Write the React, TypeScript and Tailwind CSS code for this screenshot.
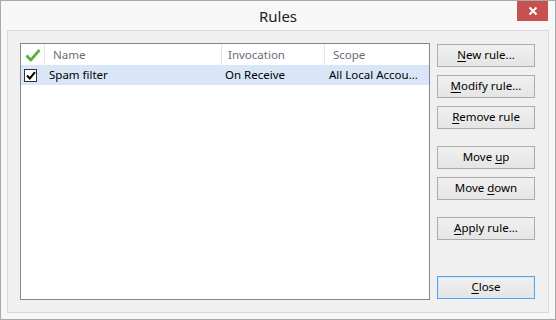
import React from "react";

const font = { fontFamily: '"Segoe UI", "Noto Sans", "Open Sans", sans-serif' };

function Btn({ children, primary }: { children: React.ReactNode; primary?: boolean }) {
  return (
    <div
      className={
        "h-[23px] w-[98px] flex items-center justify-center text-[11.5px] text-black border bg-gradient-to-b from-[#f0f0f0] to-[#e5e5e5] " +
        (primary ? "border-[#5aa2e6] shadow-[inset_0_0_0_1px_#d6e8fa]" : "border-[#acacac]")
      }
    >
      <span className="leading-none pb-[1px]">{children}</span>
    </div>
  );
}

const U = ({ c }: { c: string }) => <span className="underline underline-offset-2">{c}</span>;

export default function App() {
  return (
    <div
      className="w-[556px] h-[320px] border border-[#a9a9a9] bg-[#f7f7f7] flex flex-col overflow-hidden"
      style={font}
    >
      {/* title bar */}
      <div className="relative h-[29px] shrink-0 flex items-center justify-center">
        <span className="text-[15px] text-[#222] pt-[1px]">Rules</span>
        <div className="absolute top-0 right-[7px] w-[31px] h-[20px] bg-[#c75050] flex items-center justify-center">
          <svg width="10" height="10" viewBox="0 0 10 10">
            <path d="M1.5 1.5 L8.5 8.5 M8.5 1.5 L1.5 8.5" stroke="white" strokeWidth="2" />
          </svg>
        </div>
      </div>

      {/* content */}
      <div className="mx-[6px] h-[283px] border border-[#dadada] bg-[#f0f0f0] flex px-[12px] pt-[12px]">
        {/* list */}
        <div className="w-[410px] h-[257px] border border-[#828790] bg-white flex flex-col text-[11.5px]">
          <div className="flex h-[21px] items-center">
            <div className="w-[24px] h-full flex items-center justify-center border-r border-[#e5e5e5]">
              <svg width="16" height="14" viewBox="0 0 16 14">
                <path d="M1.5 7.5 L5.8 12 L14.5 2" stroke="#5cb03c" strokeWidth="2.8" fill="none" strokeLinejoin="round" />
              </svg>
            </div>
            <div className="w-[177px] h-full flex items-center pl-[8px] border-r border-[#e5e5e5] text-[#666d78]">Name</div>
            <div className="w-[103px] h-full flex items-center pl-[6px] border-r border-[#e5e5e5] text-[#666d78]">Invocation</div>
            <div className="flex-1 h-full flex items-center pl-[8px] text-[#666d78]">Scope</div>
          </div>
          <div className="flex h-[20px] items-center bg-[#d9e6f8] text-black">
            <div className="w-[24px] flex items-center pl-[3px]">
              <div className="w-[13px] h-[13px] border border-[#333] bg-white flex items-center justify-center">
                <svg width="10" height="9" viewBox="0 0 10 9">
                  <path d="M1 4.5 L3.8 7.5 L9 1.2" stroke="black" strokeWidth="2" fill="none" />
                </svg>
              </div>
            </div>
            <div className="w-[177px] pl-[4px]">Spam filter</div>
            <div className="w-[103px] pl-[3px]">On Receive</div>
            <div className="flex-1 pl-[4px] whitespace-nowrap overflow-hidden">All Local Accou...</div>
          </div>
        </div>

        {/* buttons */}
        <div className="ml-[7px] h-[257px] flex flex-col py-[1px]">
          <Btn><U c="N" />ew rule...</Btn>
          <div className="h-[8px]" />
          <Btn><U c="M" />odify rule...</Btn>
          <div className="h-[8px]" />
          <Btn><U c="R" />emove rule</Btn>
          <div className="h-[17px]" />
          <Btn>Move <U c="u" />p</Btn>
          <div className="h-[8px]" />
          <Btn>Move <U c="d" />own</Btn>
          <div className="h-[17px]" />
          <Btn><U c="A" />pply rule...</Btn>
          <div className="mt-auto" />
          <Btn primary><U c="C" />lose</Btn>
        </div>
      </div>
    </div>
  );
}
